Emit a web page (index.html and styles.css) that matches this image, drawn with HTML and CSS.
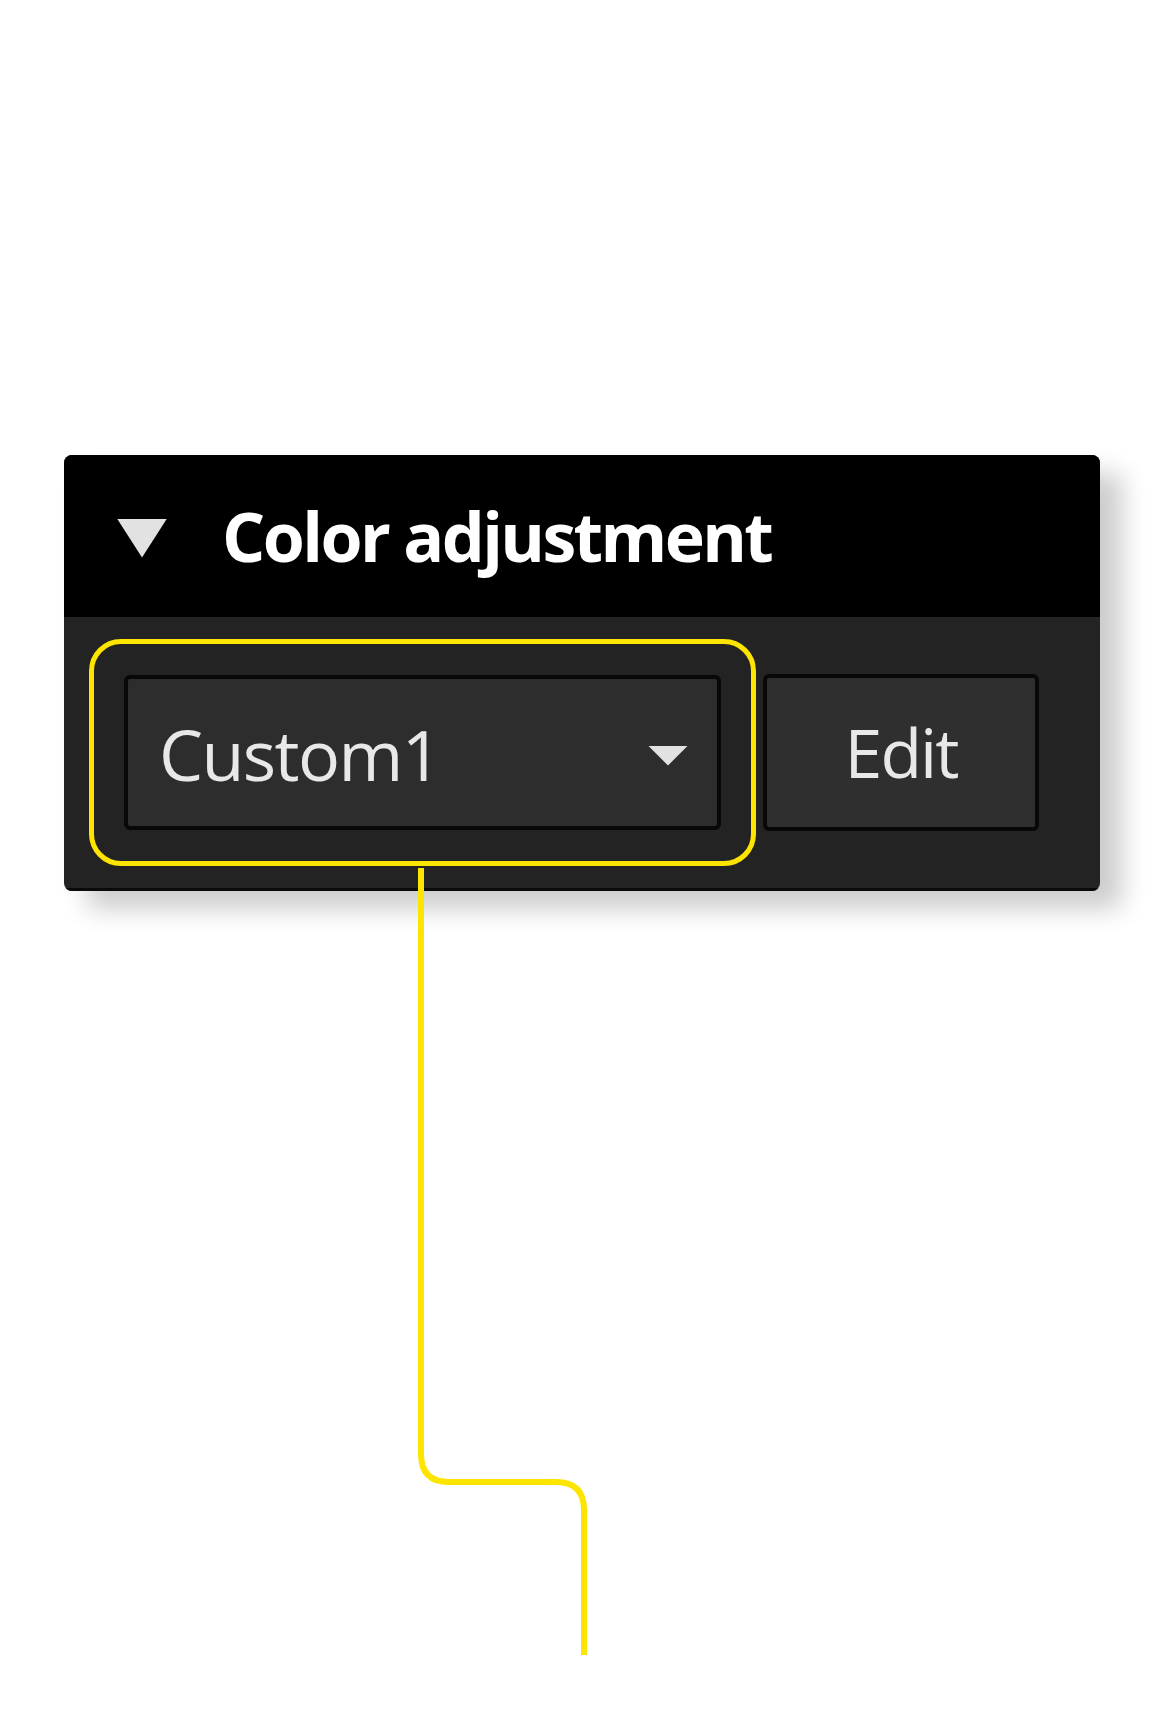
FILE: index.html
```html
<!DOCTYPE html>
<html lang="en">
<head>
    <meta charset="UTF-8">
    <meta name="viewport" content="width=device-width, initial-scale=1.0">
    <title>Color adjustment</title>
    <link rel="stylesheet" href="styles.css">
</head>
<body>
    <div class="panel">
        <div class="panel-head">
            <span class="caret"></span>
            <h1>Color adjustment</h1>
        </div>
        <div class="panel-body">
            <div class="highlight">
                <div class="select">
                    <span class="select-label">Custom1</span>
                    <span class="select-arrow"></span>
                </div>
            </div>
            <button class="btn">Edit</button>
        </div>
    </div>

    <svg class="callout" width="180" height="790" viewBox="0 0 180 790">
        <path d="M5 0 V586 Q5 614 33 614 H140 Q168 614 168 642 V787" fill="none" stroke="#fde500" stroke-width="6"/>
    </svg>
</body>
</html>
```

FILE: styles.css
```css
body {
    margin: 0;
    padding: 0;
    background: #fff;
    font-family: "Open Sans", "Noto Sans", sans-serif;
}
.panel {
    width: 1036px;
    height: 436px;
    margin: 455px 0 0 64px;
    border-radius: 8px;
    overflow: hidden;
    background: #232323;
    box-shadow: 22px 18px 26px rgba(0, 0, 0, 0.2);
    display: flex;
    flex-direction: column;
}
.panel-head {
    height: 162px;
    background: #000;
    display: flex;
    align-items: center;
    padding-left: 53px;
    flex-shrink: 0;
}
.caret {
    width: 50px;
    height: 39px;
    background: #e2e2e2;
    clip-path: polygon(0 0, 100% 0, 50% 100%);
    margin-top: 4px;
}
.panel-head h1 {
    margin: 0 0 0 55px;
    color: #fff;
    font-size: 68px;
    font-weight: 700;
    letter-spacing: -2.6px;
    line-height: 1;
}
.panel-body {
    flex: 1;
    display: flex;
    align-items: center;
    padding: 0 0 0 25px;
    border-bottom: 3px solid #0a0a0a;
}
.highlight {
    width: 657px;
    height: 217px;
    border: 5px solid #fde500;
    border-radius: 32px;
    display: flex;
    align-items: center;
    justify-content: center;
}
.select {
    height: 147px;
    width: 529px;
    background: #2d2d2d;
    border: 4px solid #080808;
    border-radius: 6px;
    display: flex;
    align-items: center;
    justify-content: space-between;
    padding: 0 29px 0 31px;
    color: #e8e8e8;
    font-size: 70px;
    letter-spacing: -1.6px;
}
.select-label {
    margin-top: 2px;
}
.select-arrow {
    width: 40px;
    height: 20px;
    background: #e2e2e2;
    clip-path: polygon(0 0, 100% 0, 50% 100%);
    margin-top: 6px;
}
.btn {
    width: 276px;
    height: 157px;
    margin-left: 7px;
    background: #2f2f2f;
    border: 4px solid #080808;
    border-radius: 6px;
    color: #e8e8e8;
    font-family: "Open Sans", "Noto Sans", sans-serif;
    font-size: 68px;
    letter-spacing: -2px;
    padding: 0 0 2px;
}
.callout {
    display: block;
    margin: -23px 0 0 416px;
}
```
